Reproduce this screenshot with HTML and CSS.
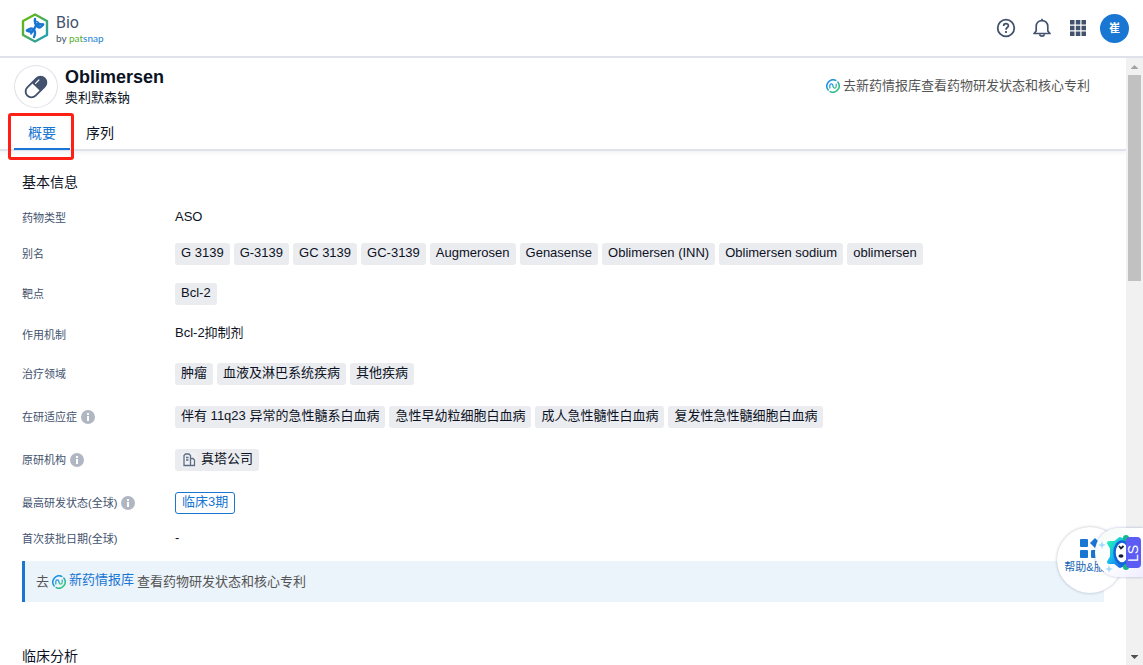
FILE: index.html
```html
<!doctype html>
<html lang="zh-CN">
  <head>
    <meta charset="UTF-8" />
    <meta name="viewport" content="width=device-width, initial-scale=1.0" />
    <title>Oblimersen - Bio by patsnap</title>
    <link rel="stylesheet" href="styles.css">
  </head>
  <body>
    <!-- Shared icons -->
    <svg class="sprite" aria-hidden="true">
      <defs>
        <linearGradient id="ring" x1="0" y1="0" x2="1" y2="1">
          <stop offset="0.2" stop-color="#1890e8" />
          <stop offset="0.9" stop-color="#2fc878" />
        </linearGradient>
      </defs>
      <symbol id="synapse" viewBox="0 0 14 14">
        <g fill="none" stroke="url(#ring)" stroke-linecap="round">
          <path stroke-width="1.5" d="M2.2 11A6.3 6.3 0 0 1 9.8 1.4M11.8 3A6.3 6.3 0 0 1 4.2 12.6" />
          <path stroke-width="1.2" d="M3.8 9V6.8C3.8 4.3 6.3 4.3 7 6.5V7.5C7.7 9.7 10.2 9.7 10.2 7.2V5" />
        </g>
      </symbol>
      <symbol id="info" viewBox="0 0 14 14">
        <circle cx="7" cy="7" r="7" fill="#b0b7c3" />
        <path fill="#fff" d="M6 3h2v2H6zM6 6h2v5H6z" />
      </symbol>
    </svg>

    <header class="topbar">
      <a class="logo" href="#">
        <svg class="logo-mark" viewBox="0 0 28 30" aria-hidden="true">
          <defs>
            <linearGradient id="hex" x1="0" y1="0" x2="1" y2="1">
              <stop offset="0.2" stop-color="#62b51e" />
              <stop offset="1" stop-color="#1b9ac8" />
            </linearGradient>
          </defs>
          <path d="M14 1.5 26 8v14l-12 6.5L2 22V8z" fill="none" stroke="url(#hex)" stroke-width="2.4" stroke-linejoin="round" />
          <g fill="none" stroke="#1976d2" stroke-linecap="round">
            <path stroke-width="2.4" d="M14 6C13 11 15 12.5 17 14C19 15.5 21 13 22 11.5" />
            <path stroke-width="2.4" d="M22 11.5C17 10.5 14.5 12 13.5 15.5C12.5 18.5 9 19.5 6 17.5" />
            <path stroke-width="2.4" d="M6 17.5C8 15.5 11 14.5 13 17C14.5 19 14 22 13 24" />
            <path stroke-width="1.4" d="M14.5 8l3 1.5M15 11l3-1M9 17l1 4M12 18.5l-2 2.5M18 11v3" />
          </g>
        </svg>
        <span class="logo-text">
          <span class="logo-name">Bio</span>
          <span class="logo-by">by <b class="green">pat</b><b class="blue">snap</b></span>
        </span>
      </a>
      <nav class="tools">
        <button class="icon-btn" aria-label="帮助">
          <svg width="20" height="20" viewBox="0 0 20 20" fill="none" stroke="#42526e" stroke-width="1.8">
            <circle cx="10" cy="10" r="8.3" />
            <path d="M7.6 8C7.6 4.8 12.4 4.8 12.4 7.8C12.4 9.6 10 9.5 10 11.7M10 13v2" />
          </svg>
        </button>
        <button class="icon-btn" aria-label="通知">
          <svg width="20" height="20" viewBox="0 0 20 20" fill="none" stroke="#42526e" stroke-width="1.7" stroke-linejoin="round">
            <path d="M2 15.5h16L15.8 13V8.5C15.8 4.8 13.2 2.6 10 2.6S4.2 4.8 4.2 8.5V13zM10 .8v2M7.5 16.5c.8 2.2 4.2 2.2 5 0" />
          </svg>
        </button>
        <button class="icon-btn" aria-label="应用">
          <svg width="20" height="20" viewBox="0 0 20 20" fill="#42526e">
            <path d="M2 2h4.500v4.500H2zM7.800 2h4.500v4.500H7.800zM13.500 2H18v4.500h-4.500zM2 7.800h4.500v4.500H2zM7.800 7.800h4.500v4.500H7.800zM13.500 7.800H18v4.500h-4.500zM2 13.500h4.500V18H2zM7.800 13.500h4.500V18H7.800zM13.500 13.500H18V18h-4.500z" />
          </svg>
        </button>
        <button class="avatar">崔</button>
      </nav>
    </header>

    <div class="viewport">
      <main class="page">
        <section class="drug-head">
          <div class="drug-row">
            <span class="drug-icon">
              <svg width="28" height="28" viewBox="0 0 24 24" aria-hidden="true">
                <g transform="rotate(-45 12 12)">
                  <rect x="1.500" y="7" width="21" height="10" rx="5" fill="#fff" stroke="#42526e" stroke-width="1.6" />
                  <path d="M12 7h5.500a5 5 0 0 1 0 10H12z" fill="#42526e" />
                  <path d="M14 9.500h4" stroke="#fff" stroke-width="1" stroke-linecap="round" />
                </g>
              </svg>
            </span>
            <div class="drug-names">
              <h1>Oblimersen</h1>
              <p>奥利默森钠</p>
            </div>
            <a class="synapse-link" href="#">
              <svg class="mini" aria-hidden="true"><use href="#synapse" /></svg>
              去新药情报库查看药物研发状态和核心专利
            </a>
          </div>
          <nav class="tabs">
            <a class="tab active" href="#basic">概要<span class="marker"></span></a>
            <a class="tab" href="#sequence">序列</a>
          </nav>
        </section>

        <section class="block" id="basic">
          <h2>基本信息</h2>
          <dl class="info">
            <div class="row">
              <dt>药物类型</dt>
              <dd>ASO</dd>
            </div>
            <div class="row medium">
              <dt>别名</dt>
              <dd>
                <span class="tag">G 3139</span>
                <span class="tag">G-3139</span>
                <span class="tag">GC 3139</span>
                <span class="tag">GC-3139</span>
                <span class="tag">Augmerosen</span>
                <span class="tag">Genasense</span>
                <span class="tag">Oblimersen (INN)</span>
                <span class="tag">Oblimersen sodium</span>
                <span class="tag">oblimersen</span>
              </dd>
            </div>
            <div class="row medium">
              <dt>靶点</dt>
              <dd><span class="tag">Bcl-2</span></dd>
            </div>
            <div class="row medium">
              <dt class="low">作用机制</dt>
              <dd>Bcl-2抑制剂</dd>
            </div>
            <div class="row tall">
              <dt>治疗领域</dt>
              <dd>
                <span class="tag">肿瘤</span>
                <span class="tag">血液及淋巴系统疾病</span>
                <span class="tag">其他疾病</span>
              </dd>
            </div>
            <div class="row tall">
              <dt>在研适应症 <svg class="mini"><use href="#info" /></svg></dt>
              <dd>
                <span class="tag">伴有 11q23 异常的急性髓系白血病</span>
                <span class="tag">急性早幼粒细胞白血病</span>
                <span class="tag">成人急性髓性白血病</span>
                <span class="tag">复发性急性髓细胞白血病</span>
              </dd>
            </div>
            <div class="row tall">
              <dt>原研机构 <svg class="mini"><use href="#info" /></svg></dt>
              <dd>
                <span class="tag org">
                  <svg width="16" height="16" viewBox="0 0 16 16" aria-hidden="true">
                    <rect width="16" height="16" rx="3" fill="#eff0f3" />
                    <path d="M3 13.500V3.500L4.500 2H8l1.500 1.500v10zM9.500 6.500H12l1.500 1.500v5.500h-4M5 5.500h2.500M5 8h2.500" fill="none" stroke="#5e6c84" stroke-width="1.3" />
                  </svg>
                  <span>真塔公司</span>
                </span>
              </dd>
            </div>
            <div class="row">
              <dt>最高研发状态(全球) <svg class="mini"><use href="#info" /></svg></dt>
              <dd><span class="tag stage">临床3期</span></dd>
            </div>
            <div class="row last">
              <dt>首次获批日期(全球)</dt>
              <dd>-</dd>
            </div>
          </dl>
          <p class="notice">
            去
            <a href="#"><svg class="mini" aria-hidden="true"><use href="#synapse" /></svg><span>新药情报库</span></a>
            查看药物研发状态和核心专利
          </p>
        </section>

        <section class="block">
          <h2>临床分析</h2>
        </section>
      </main>

      <div class="scrollbar" aria-hidden="true">
        <span class="arrow up"></span>
        <div class="track"><div class="thumb"></div></div>
        <span class="arrow down"></span>
      </div>
    </div>

    <!-- Floating helpers -->
    <button class="help-float">
      <svg width="20" height="20" viewBox="0 0 20 20" fill="#1976d2" aria-hidden="true">
        <rect x="0" y="1" width="8" height="8" rx="1" />
        <rect x="0" y="12" width="8" height="8" rx="1" />
        <rect x="11" y="12" width="8" height="8" rx="1" />
        <path d="m15 0 5 5-5 5-5-5z" />
      </svg>
      <span>帮助&amp;服务</span>
    </button>
    <button class="ls-float" aria-label="LS">
      <svg width="48" height="48" viewBox="0 0 48 48" aria-hidden="true">
        <defs>
          <linearGradient id="bot" gradientUnits="userSpaceOnUse" x1="11" x2="30" y1="18" y2="32">
            <stop offset="0" stop-color="#22edb4" />
            <stop offset="0.5" stop-color="#16b8ee" />
            <stop offset="1" stop-color="#1769e8" />
          </linearGradient>
        </defs>
        <path d="M14 15h6l5-4 5 2v23l-5 2-5-4h-6l3-5v-9z" fill="url(#bot)" stroke="url(#bot)" stroke-width="4" stroke-linejoin="round" />
        <circle cx="31" cy="10" r="3" fill="#12b886" />
        <circle cx="31" cy="39" r="3" fill="#12b886" />
        <ellipse cx="27" cy="24.500" rx="7.5" ry="11" fill="#fff" stroke="#1464d8" stroke-width="2.5" />
        <rect x="31" y="9" width="15" height="31" rx="4" fill="#5b5cf6" />
        <path d="M24 18l2 2.5 2.500-2.500" fill="none" stroke="#111b38" stroke-width="1.8" />
        <ellipse cx="26" cy="28" rx="2.5" ry="1.8" fill="#111b38" />
        <path d="M7 13l1 3 3 1-3 1-1 3-1-3-3-1 3-1zM14 37l1 3 3 1-3 1-1 3-1-3-3-1 3-1z" fill="#a3d8ff" />
        <text x="43" y="34" transform="rotate(-90 43 34)" class="ls-text">LS</text>
      </svg>
    </button>
  </body>
</html>
```
FILE: styles.css
```css
:root {
  --blue: #1976d2;
  --ink: #0b1224;
  --slate: #42526e;
  --line: #dfe2e9;
  --tag-bg: #ebecf0;
}

* {
  box-sizing: border-box;
}

body {
  margin: 0;
  height: 100vh;
  display: flex;
  flex-direction: column;
  overflow: hidden;
  position: relative;
  font-family: "Liberation Sans", "Noto Sans CJK SC", sans-serif;
  font-size: 13px;
  line-height: 20px;
  color: var(--ink);
  background: #fff;
}

h1,
h2,
p,
dl,
dd {
  margin: 0;
}

a {
  color: inherit;
  text-decoration: none;
}

button {
  border: none;
  padding: 0;
  background: none;
  font: inherit;
  cursor: pointer;
}

.sprite {
  position: absolute;
  width: 0;
  height: 0;
}

.mini {
  width: 14px;
  height: 14px;
  flex: none;
}

/* Top bar */
.topbar {
  display: flex;
  flex: none;
  justify-content: space-between;
  align-items: center;
  height: 58px;
  padding: 0 14px 0 21px;
  border-bottom: 2px solid var(--line);
}

.logo {
  display: flex;
  align-items: center;
  gap: 7px;
}

.logo-mark {
  width: 28px;
  height: 30px;
}

.logo-text {
  display: flex;
  flex-direction: column;
}

.logo-name {
  font: 16px/19px Roboto, sans-serif;
  color: var(--slate);
}

.logo-by {
  font: 10px/12px Lato, sans-serif;
  color: var(--slate);
}

.logo-by b {
  font-weight: 400;
}

.logo-by .green {
  color: #58b01c;
}

.logo-by .blue {
  color: #1b7fd6;
}

.tools {
  display: flex;
  align-items: center;
  gap: 16px;
}

.icon-btn {
  display: flex;
}

.avatar {
  width: 29px;
  height: 29px;
  margin-left: -4px;
  border-radius: 50%;
  background: var(--blue);
  color: #fff;
  font-size: 11px;
  font-weight: 700;
}

/* Scroll area */
.viewport {
  display: flex;
  flex: 1;
  min-height: 0;
}

.page {
  flex: 1;
  min-width: 0;
  overflow: hidden;
}

.scrollbar {
  display: flex;
  flex: none;
  flex-direction: column;
  align-items: center;
  width: 17px;
  background: #f1f1f1;
}

.track {
  flex: 1;
  width: 13px;
}

.thumb {
  height: 36%;
  background: #c1c1c1;
}

.arrow {
  width: 8px;
  height: 4px;
  margin: 7px 0 6px;
  background: #a3a3a3;
  clip-path: polygon(50% 0, 100% 100%, 0 100%);
}

.arrow.down {
  background: #505050;
  clip-path: polygon(0 0, 100% 0, 50% 100%);
}

/* Drug header */
.drug-head {
  padding: 7px 36px 0 14px;
  border-bottom: 2px solid var(--line);
  box-shadow: 0 2px 4px rgba(9, 30, 66, 0.06);
}

.drug-row {
  display: flex;
  gap: 7px;
}

.drug-icon {
  display: flex;
  align-items: center;
  justify-content: center;
  width: 44px;
  height: 43px;
  border: 1px solid var(--line);
  border-radius: 50%;
}

.drug-names {
  flex: 1;
}

h1 {
  font-size: 18px;
  font-weight: 700;
  line-height: 24px;
}

.drug-names p {
  line-height: 18px;
}

.synapse-link {
  display: flex;
  align-items: center;
  align-self: flex-start;
  gap: 3px;
  padding-top: 11px;
  color: #555;
}

.tabs {
  display: flex;
  gap: 2px;
}

.tab {
  position: relative;
  padding: 14px 14px 4px;
  font-size: 14px;
  line-height: 22px;
}

.tab.active {
  margin-bottom: -1px;
  border-bottom: 2px solid var(--blue);
  color: var(--blue);
}

.marker {
  position: absolute;
  top: 5px;
  bottom: -12px;
  left: -6px;
  right: -4px;
  border: 3px solid #ff2015;
  border-radius: 3px;
}

/* Basic info */
.block {
  padding: 20px 22px 0;
}

h2 {
  font-size: 14px;
  font-weight: 400;
  line-height: 22px;
}

.info {
  padding-top: 14px;
}

.row {
  display: flex;
  padding-bottom: 14px;
}

.row.medium {
  padding-bottom: 18px;
}

.row.tall {
  padding-bottom: 21px;
}

.row.last {
  padding-bottom: 11px;
}

dt {
  display: flex;
  flex: none;
  align-items: center;
  gap: 4px;
  width: 153px;
  height: 22px;
  font-size: 11px;
  color: var(--slate);
}

dt.low {
  align-items: flex-end;
}

dd {
  display: flex;
  flex-wrap: wrap;
  gap: 4px;
}

.tag {
  height: 22px;
  padding: 0 6px;
  border-radius: 3px;
  background: var(--tag-bg);
}

.tag.org {
  display: flex;
  align-items: center;
  gap: 4px;
}

.tag.org span {
  padding-bottom: 2px;
}

.tag.stage {
  border: 1px solid var(--blue);
  background: #fff;
  color: var(--blue);
  line-height: 18px;
}

.notice {
  display: flex;
  align-items: center;
  gap: 3px;
  height: 41px;
  padding-left: 11px;
  border-left: 3px solid var(--blue);
  background: #ebf3fb;
  color: #555;
}

.notice a {
  display: flex;
  align-items: center;
  gap: 3px;
  color: var(--blue);
}

.notice a span {
  padding-bottom: 4px;
}

.block + .block {
  padding-top: 43px;
}

/* Floating helpers */
.help-float {
  position: absolute;
  right: 20px;
  bottom: 72px;
  display: flex;
  flex-direction: column;
  align-items: center;
  width: 66px;
  height: 66px;
  padding-top: 11px;
  border-radius: 50%;
  background: #fff;
  box-shadow: 0 0 3px rgba(9, 30, 66, 0.3);
  color: #1565b5;
  font-size: 11px;
  line-height: 18px;
  white-space: nowrap;
}

.ls-float {
  position: absolute;
  right: 0;
  bottom: 88px;
  width: 48px;
  height: 49px;
  border-radius: 24px 0 0 24px;
  background: linear-gradient(135deg, #f1fbf8, #fff 50%, #f0edff);
  box-shadow: 0 0 3px rgba(60, 80, 160, 0.4);
}

.ls-text {
  font: 14px "Liberation Sans", sans-serif;
  fill: #fff;
}
```
